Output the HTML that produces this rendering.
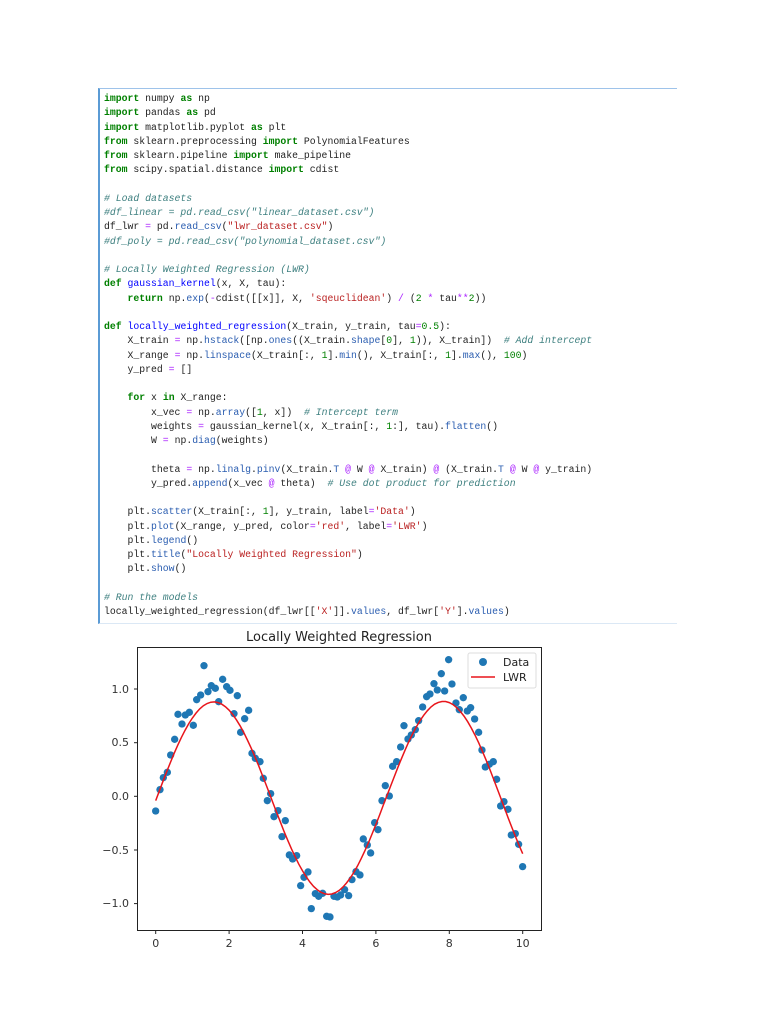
<!DOCTYPE html>
<html><head><meta charset="utf-8"><style>
body{margin:0;background:#fff;width:768px;height:1024px;position:relative;overflow:hidden}
.cell{position:absolute;left:98px;top:88px;width:577px;height:534px;border-top:1px solid #9ec3ea;border-left:2px solid #5b9bd5;border-bottom:1px solid #dbe8f5}
pre{position:absolute;left:104px;top:92px;margin:0;font-family:"Liberation Mono","DejaVu Sans Mono",monospace;font-size:9.8px;line-height:14.25px;color:#222}
.k{color:#008000;font-weight:bold}.f{color:#0000ff}.s{color:#ba2121}.c{color:#3d7f7f;font-style:italic}.o{color:#aa22ff}.n{color:#008000}.m{color:#2a5db0}
</style></head><body>
<div class="cell"></div>
<pre><span class="k">import</span> numpy <span class="k">as</span> np
<span class="k">import</span> pandas <span class="k">as</span> pd
<span class="k">import</span> matplotlib.pyplot <span class="k">as</span> plt
<span class="k">from</span> sklearn.preprocessing <span class="k">import</span> PolynomialFeatures
<span class="k">from</span> sklearn.pipeline <span class="k">import</span> make_pipeline
<span class="k">from</span> scipy.spatial.distance <span class="k">import</span> cdist

<span class="c"># Load datasets</span>
<span class="c">#df_linear = pd.read_csv("linear_dataset.csv")</span>
df_lwr <span class="o">=</span> pd.<span class="m">read_csv</span>(<span class="s">"lwr_dataset.csv"</span>)
<span class="c">#df_poly = pd.read_csv("polynomial_dataset.csv")</span>

<span class="c"># Locally Weighted Regression (LWR)</span>
<span class="k">def</span> <span class="f">gaussian_kernel</span>(x, X, tau):
    <span class="k">return</span> np.<span class="m">exp</span>(<span class="o">-</span>cdist([[x]], X, <span class="s">'sqeuclidean'</span>) <span class="o">/</span> (<span class="n">2</span> <span class="o">*</span> tau<span class="o">**</span><span class="n">2</span>))

<span class="k">def</span> <span class="f">locally_weighted_regression</span>(X_train, y_train, tau<span class="o">=</span><span class="n">0.5</span>):
    X_train <span class="o">=</span> np.<span class="m">hstack</span>([np.<span class="m">ones</span>((X_train.<span class="m">shape</span>[<span class="n">0</span>], <span class="n">1</span>)), X_train])  <span class="c"># Add intercept</span>
    X_range <span class="o">=</span> np.<span class="m">linspace</span>(X_train[:, <span class="n">1</span>].<span class="m">min</span>(), X_train[:, <span class="n">1</span>].<span class="m">max</span>(), <span class="n">100</span>)
    y_pred <span class="o">=</span> []

    <span class="k">for</span> x <span class="k">in</span> X_range:
        x_vec <span class="o">=</span> np.<span class="m">array</span>([<span class="n">1</span>, x])  <span class="c"># Intercept term</span>
        weights <span class="o">=</span> gaussian_kernel(x, X_train[:, <span class="n">1</span>:], tau).<span class="m">flatten</span>()
        W <span class="o">=</span> np.<span class="m">diag</span>(weights)

        theta <span class="o">=</span> np.<span class="m">linalg</span>.<span class="m">pinv</span>(X_train.<span class="m">T</span> <span class="o">@</span> W <span class="o">@</span> X_train) <span class="o">@</span> (X_train.<span class="m">T</span> <span class="o">@</span> W <span class="o">@</span> y_train)
        y_pred.<span class="m">append</span>(x_vec <span class="o">@</span> theta)  <span class="c"># Use dot product for prediction</span>

    plt.<span class="m">scatter</span>(X_train[:, <span class="n">1</span>], y_train, label<span class="o">=</span><span class="s">'Data'</span>)
    plt.<span class="m">plot</span>(X_range, y_pred, color<span class="o">=</span><span class="s">'red'</span>, label<span class="o">=</span><span class="s">'LWR'</span>)
    plt.<span class="m">legend</span>()
    plt.<span class="m">title</span>(<span class="s">"Locally Weighted Regression"</span>)
    plt.<span class="m">show</span>()

<span class="c"># Run the models</span>
locally_weighted_regression(df_lwr[[<span class="s">'X'</span>]].<span class="m">values</span>, df_lwr[<span class="s">'Y'</span>].<span class="m">values</span>)</pre>
<svg width="768" height="1024" style="position:absolute;left:0;top:0" font-family="DejaVu Sans, sans-serif">
<text x="339" y="641" font-size="13" text-anchor="middle" fill="#222">Locally Weighted Regression</text>
<rect x="137.5" y="647.5" width="404" height="283" fill="none" stroke="#222" stroke-width="1"/>
<g font-size="11" fill="#333" text-anchor="end">
<text x="129" y="693">1.0</text><text x="129" y="746">0.5</text><text x="129" y="800">0.0</text><text x="129" y="854">−0.5</text><text x="129" y="907">−1.0</text>
</g>
<g stroke="#222"><line x1="134" y1="689" x2="137" y2="689"/><line x1="134" y1="742.7" x2="137" y2="742.7"/><line x1="134" y1="796.3" x2="137" y2="796.3"/><line x1="134" y1="850" x2="137" y2="850"/><line x1="134" y1="903.6" x2="137" y2="903.6"/>
<line x1="155.7" y1="931" x2="155.7" y2="934"/><line x1="229.1" y1="931" x2="229.1" y2="934"/><line x1="302.5" y1="931" x2="302.5" y2="934"/><line x1="375.9" y1="931" x2="375.9" y2="934"/><line x1="449.3" y1="931" x2="449.3" y2="934"/><line x1="522.7" y1="931" x2="522.7" y2="934"/></g>
<g font-size="11" fill="#333" text-anchor="middle">
<text x="155.7" y="947">0</text><text x="229.1" y="947">2</text><text x="302.5" y="947">4</text><text x="375.9" y="947">6</text><text x="449.3" y="947">8</text><text x="522.7" y="947">10</text>
</g>
<g transform="translate(100,625) scale(0.3333)" fill="#1f77b4" id="pts"></g>
<polyline id="curve" fill="none" stroke="#e8151b" stroke-width="1.5" points=""/>
<rect x="468" y="653" width="68" height="35" rx="2" fill="#fff" fill-opacity="0.85" stroke="#ddd"/>
<circle cx="483" cy="662" r="4" fill="#1f77b4"/>
<line x1="471" y1="677" x2="495" y2="677" stroke="#e8151b" stroke-width="1.5"/>
<text x="503" y="666" font-size="11" fill="#222">Data</text>
<text x="503" y="681" font-size="11" fill="#222">LWR</text>
</svg>
<script>
var p=[[167,558],[180,494],[190,458],[202,442],[212,390],[224,343],[234,268],[246,297],[256,270],[268,262],[280,301],[290,224],[302,210],[312,122],[324,200],[334,182],[346,190],[356,230],[368,163],[380,185],[390,196],[402,266],[412,212],[422,322],[434,281],[446,256],[456,385],[466,400],[480,410],[490,460],[502,527],[512,506],[522,575],[534,557],[546,635],[556,587],[568,690],[578,702],[590,692],[602,782],[612,757],[624,741],[634,851],[646,806],[656,814],[668,805],[680,874],[690,876],[702,814],[712,816],[722,810],[734,794],[746,812],[756,764],[768,740],[780,750],[790,642],[802,660],[812,684],[824,593],[834,614],[846,527],[856,482],[868,513],[878,424],[890,410],[902,366],[912,302],[924,342],[934,330],[946,314],[956,287],[968,246],[980,215],[990,207],[1002,176],[1012,195],[1024,146],[1034,198],[1046,104],[1056,177],[1068,234],[1078,254],[1090,218],[1102,258],[1112,248],[1124,282],[1136,322],[1146,375],[1156,426],[1168,418],[1180,410],[1190,463],[1202,543],[1212,530],[1224,553],[1234,630],[1246,626],[1256,658],[1268,725]];
var g=document.getElementById('pts'),h='';
p.forEach(function(a){h+='<circle cx="'+a[0]+'" cy="'+a[1]+'" r="11"/>';});
g.innerHTML=h;
var s='';
for(var i=0;i<=100;i++){var x=i/10;var y=0.91*Math.sin(x)-0.04*Math.cos(x*0.5)*(1-x/10)-0.04*(x/10);
s+=(155.7+x*36.7).toFixed(1)+','+(796.3-y*107.3).toFixed(1)+' ';}
document.getElementById('curve').setAttribute('points',s);
</script>
</body></html>
